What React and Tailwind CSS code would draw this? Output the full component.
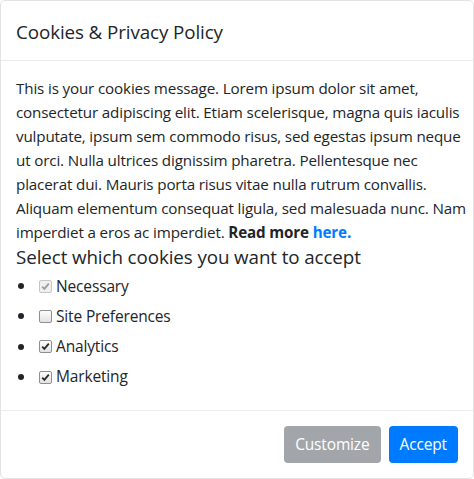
import React from "react";

function Box({ checked, disabled }) {
  return (
    <span
      className={
        "inline-flex h-[13px] w-[13px] shrink-0 items-center justify-center rounded-[2px] border " +
        (disabled
          ? "border-[#c6c6c6] bg-[#f0f0f0]"
          : "border-[#8e8f8f] bg-gradient-to-b from-[#fdfdfd] to-[#e2e2e2]")
      }
    >
      {checked && (
        <svg width="9" height="9" viewBox="0 0 9 9">
          <path
            d="M1.2 4.6 L3.4 6.9 L7.8 1.6"
            fill="none"
            stroke={disabled ? "#9d9d9d" : "#2b2b2b"}
            strokeWidth="1.8"
          />
        </svg>
      )}
    </span>
  );
}

const lines = [
  "This is your cookies message. Lorem ipsum dolor sit amet,",
  "consectetur adipiscing elit. Etiam scelerisque, magna quis iaculis",
  "vulputate, ipsum sem commodo risus, sed egestas ipsum neque",
  "ut orci. Nulla ultrices dignissim pharetra. Pellentesque nec",
  "placerat dui. Mauris porta risus vitae nulla rutrum convallis.",
  "Aliquam elementum consequat ligula, sed malesuada nunc. Nam",
];

const items = [
  { label: "Necessary", checked: true, disabled: true },
  { label: "Site Preferences", checked: false },
  { label: "Analytics", checked: true },
  { label: "Marketing", checked: true },
];

export default function App() {
  return (
    <div
      className="flex h-[479px] w-[474px] flex-col overflow-hidden rounded-[5px] border border-[#e3e3e3] bg-white text-[#212529]"
      style={{ fontFamily: '"Open Sans", "Noto Sans", sans-serif' }}
    >
      <div className="flex h-[60px] shrink-0 items-center border-b border-[#e9ecef] px-[15px] pt-[4px]">
        <h5 className="text-[18.8px] font-medium leading-none tracking-[-0.1px]">
          Cookies &amp; Privacy Policy
        </h5>
      </div>
      <div className="flex-1 px-[15px] pt-[15px]">
        <p className="text-[15.2px] leading-[24px] tracking-[-0.15px]">
          {lines.map((l) => (
            <span key={l} className="block whitespace-nowrap">
              {l}
            </span>
          ))}
          <span className="block whitespace-nowrap">
            imperdiet a eros ac imperdiet. <b className="font-bold">Read more</b>{" "}
            <a className="font-bold text-[#007bff]">here.</a>
          </span>
        </p>
        <h5 className="mt-[1px] text-[18.8px] font-medium leading-[24px] tracking-[-0.1px]">
          Select which cookies you want to accept
        </h5>
        <ul className="mt-[2px] text-[15.5px]">
          {items.map((it) => (
            <li key={it.label} className="flex h-[30.3px] items-center">
              <span className="ml-[2px] h-[6px] w-[6px] shrink-0 rounded-full bg-[#212529]" />
              <span className="ml-[15px] flex items-center gap-[4px]">
                <Box checked={it.checked} disabled={it.disabled} />
                <span className="tracking-[-0.15px]">{it.label}</span>
              </span>
            </li>
          ))}
        </ul>
      </div>
      <div className="flex h-[68px] shrink-0 items-center justify-end gap-[8px] border-t border-[#e9ecef] px-[15px]">
        <button className="h-[37px] rounded-[4px] bg-[#a2a6aa] px-[11px] text-[15.5px] tracking-[-0.15px] text-white">
          Customize
        </button>
        <button className="h-[37px] rounded-[4px] bg-[#007bff] px-[11px] text-[15.5px] tracking-[-0.15px] text-white">
          Accept
        </button>
      </div>
    </div>
  );
}
